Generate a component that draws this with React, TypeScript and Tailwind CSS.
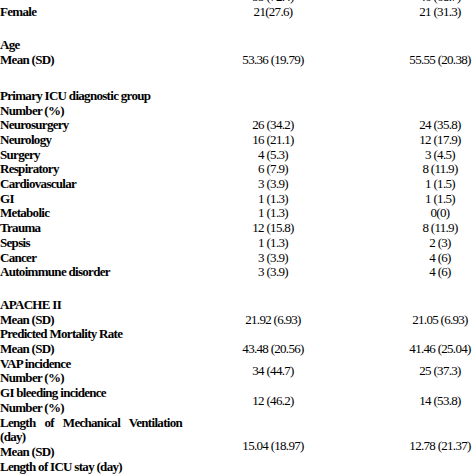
import React from 'react';

type Row = {
    labels: string[];
    values?: [string, string];
    gap?: string;
    valueAlign?: string;
};

const rows: Row[] = [
    { labels: [''], values: ['55 (72.4)', '46 (68.7)'] },
    { labels: ['Female'], values: ['21(27.6)', '21 (31.3)'] },
    { labels: ['Age'], gap: 'mt-[19px]' },
    { labels: ['Mean (SD)'], values: ['53.36 (19.79)', '55.55 (20.38)'] },
    { labels: ['Primary ICU diagnostic group'], gap: 'mt-[21px]' },
    { labels: ['Number (%)'] },
    { labels: ['Neurosurgery'], values: ['26 (34.2)', '24 (35.8)'] },
    { labels: ['Neurology'], values: ['16 (21.1)', '12 (17.9)'] },
    { labels: ['Surgery'], values: ['4 (5.3)', '3 (4.5)'] },
    { labels: ['Respiratory'], values: ['6 (7.9)', '8 (11.9)'] },
    { labels: ['Cardiovascular'], values: ['3 (3.9)', '1 (1.5)'] },
    { labels: ['GI'], values: ['1 (1.3)', '1 (1.5)'] },
    { labels: ['Metabolic'], values: ['1 (1.3)', '0(0)'] },
    { labels: ['Trauma'], values: ['12 (15.8)', '8 (11.9)'] },
    { labels: ['Sepsis'], values: ['1 (1.3)', '2 (3)'] },
    { labels: ['Cancer'], values: ['3 (3.9)', '4 (6)'] },
    { labels: ['Autoimmune disorder'], values: ['3 (3.9)', '4 (6)'] },
    { labels: ['APACHE II'], gap: 'mt-[18px]' },
    { labels: ['Mean (SD)'], values: ['21.92 (6.93)', '21.05 (6.93)'] },
    { labels: ['Predicted Mortality Rate'] },
    { labels: ['Mean (SD)'], values: ['43.48 (20.56)', '41.46 (25.04)'] },
    { labels: ['VAP incidence', 'Number (%)'], values: ['34 (44.7)', '25 (37.3)'] },
    { labels: ['GI bleeding incidence', 'Number (%)'], values: ['12 (46.2)', '14 (53.8)'] },
    {
        labels: ['Length of Mechanical Ventilation (day)', 'Mean (SD)'],
        values: ['15.04 (18.97)', '12.78 (21.37)'],
        valueAlign: 'self-start pt-[23px]',
    },
    { labels: ['Length of ICU stay (day)'] },
];

export default function App() {
    return (
        <div className="w-[474px] h-[474px] overflow-hidden bg-white text-black">
            {/* table is cropped: the Male row above only peeks in at the top */}
            <div
                className="w-[516px] mt-[-10px] text-[13px] leading-[14.7px] tracking-[-0.7px]"
                style={{ fontFamily: '"Liberation Serif", "Times New Roman", serif' }}
            >
                {rows.map((row, i) => (
                    <div key={i} className={`grid grid-cols-[182px_182px_152px] items-center ${row.gap ?? ''}`}>
                        <div className="font-bold text-justify">
                            {row.labels.map((l, j) => (
                                <div key={j} className="min-h-[14.7px]">{l}</div>
                            ))}
                        </div>
                        {row.values ? (
                            <>
                                <div className={`text-center ${row.valueAlign ?? ''}`}>{row.values[0]}</div>
                                <div className={`text-center ${row.valueAlign ?? ''}`}>{row.values[1]}</div>
                            </>
                        ) : (
                            <>
                                <div />
                                <div />
                            </>
                        )}
                    </div>
                ))}
            </div>
        </div>
    );
}
